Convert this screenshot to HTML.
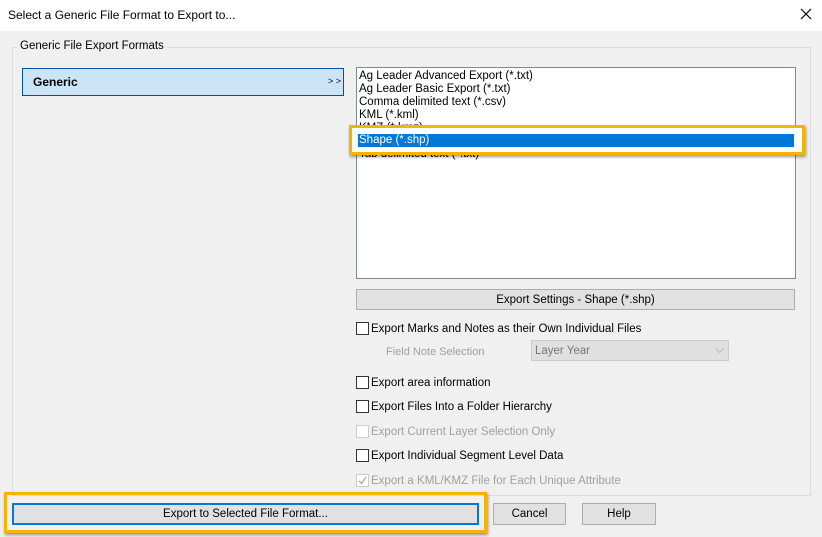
<!DOCTYPE html>
<html><head><style>
*{margin:0;padding:0;box-sizing:border-box}
body{width:822px;height:537px;background:#f0f0f0;font-family:"Liberation Sans",sans-serif;font-size:11.5px;color:#000;position:relative;overflow:hidden}
.a{position:absolute;white-space:nowrap}
.btn{position:absolute;background:#e1e1e1;border:1px solid #adadad;text-align:center}
.cb{position:absolute;width:13px;height:13px;border:1px solid #333;background:#fff}
.dis{color:#a0a0a0}
.t{margin-top:1px}
</style></head><body>
<div class="a" style="left:0;top:0;width:822px;height:31px;background:#fff"></div>
<div class="a" style="left:8px;top:8px;font-size:12px">Select a Generic File Format to Export to...</div>
<svg class="a" style="left:800px;top:8px" width="12" height="12"><path d="M1 1L11 11M11 1L1 11" stroke="#000" stroke-width="1.2"/></svg>
<div class="a" style="left:12px;top:47px;width:799px;height:449px;border:1px solid #dcdcdc"></div>
<div class="a" style="left:17px;top:40px;background:#f0f0f0;padding:0 3px;font-size:11.5px">Generic File Export Formats</div>
<div class="a" style="left:22px;top:68px;width:322px;height:28px;background:#cce4f7;border:1px solid #005499"></div>
<div class="a" style="left:33px;top:75px;font-weight:bold;font-size:12px">Generic</div>
<div class="a" style="left:328px;top:76px;font-size:9px">&gt; &gt;</div>
<div class="a" style="left:356px;top:67px;width:440px;height:212px;background:#fff;border:1px solid #828790"></div>
<div class="a" style="left:359px;top:70px;line-height:13px;font-size:11.5px">Ag Leader Advanced Export (*.txt)<br>Ag Leader Basic Export (*.txt)<br>Comma delimited text (*.csv)<br>KML (*.kml)<br>KMZ (*.kmz)</div>
<div class="a" style="left:359px;top:148px;line-height:13px;font-size:11.5px">Tab delimited text (*.txt)</div>
<div class="a" style="left:349px;top:125px;width:456px;height:30px;border:3px solid #f5b400;background:#fff;box-shadow:1px 2px 3px rgba(0,0,0,.4)"></div>
<div class="a" style="left:358px;top:134px;width:436px;height:13px;background:#0078d7;color:#fff;line-height:13px;padding-left:1px">Shape (*.shp)</div>
<div class="btn" style="left:356px;top:289px;width:439px;height:21px;line-height:20px">Export Settings - Shape (*.shp)</div>
<div class="cb" style="left:356px;top:322px"></div><div class="a t" style="left:371px;top:322px">Export Marks and Notes as their Own Individual Files</div>
<div class="a dis" style="left:386px;top:346px;font-size:11px">Field Note Selection</div>
<div class="a" style="left:531px;top:340px;width:198px;height:21px;background:#e0e0e0;border:1px solid #ccc;color:#777;padding:4px 3px">Layer Year</div>
<svg class="a" style="left:715px;top:348px" width="9" height="6"><path d="M0.5 0.5L4.5 4.5L8.5 0.5" stroke="#bbb" fill="none"/></svg>
<div class="cb" style="left:356px;top:376px"></div><div class="a t" style="left:371px;top:376px">Export area information</div>
<div class="cb" style="left:356px;top:400px"></div><div class="a t" style="left:371px;top:400px">Export Files Into a Folder Hierarchy</div>
<div class="cb" style="left:356px;top:425px;border-color:#ccc"></div><div class="a dis t" style="left:371px;top:425px">Export Current Layer Selection Only</div>
<div class="cb" style="left:356px;top:449px"></div><div class="a t" style="left:371px;top:449px">Export Individual Segment Level Data</div>
<div class="cb" style="left:356px;top:474px;border-color:#ccc"></div>
<svg class="a" style="left:357px;top:475px" width="11" height="11"><path d="M2 6L4.5 8.5L9 2" stroke="#aaa" stroke-width="1.3" fill="none"/></svg>
<div class="a dis t" style="left:371px;top:474px">Export a KML/KMZ File for Each Unique Attribute</div>
<div class="a" style="left:4px;top:492px;width:483px;height:41px;border:3px solid #f5b400;box-shadow:1px 2px 3px rgba(0,0,0,.4)"></div>
<div class="btn" style="left:12px;top:503px;width:467px;height:22px;border:2px solid #0078d7;line-height:19px">Export to Selected File Format...</div>
<div class="btn" style="left:493px;top:503px;width:73px;height:22px;line-height:21px">Cancel</div>
<div class="btn" style="left:582px;top:503px;width:74px;height:22px;line-height:21px">Help</div>
</body></html>
